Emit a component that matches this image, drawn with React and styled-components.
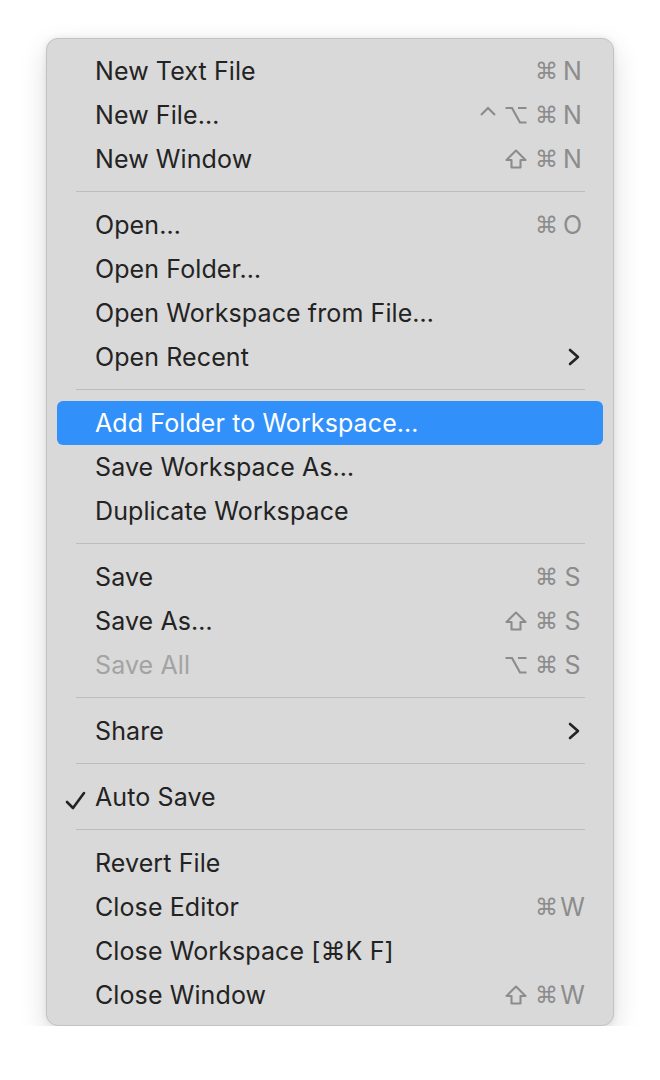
import React from 'react';
import styled, { createGlobalStyle } from 'styled-components';

const Global = createGlobalStyle`
  html, body { margin: 0; padding: 0; background: #ffffff; }
  body { font-family: Inter, "Liberation Sans", "DejaVu Sans", sans-serif; }
`;

const Page = styled.div`
  padding: 38px 0 0 46px;
`;

const Menu = styled.div`
  width: 568px;
  box-sizing: border-box;
  padding: 10px 10px 8px;
  background: #d9d9d9;
  border: 1px solid #c2c2c2;
  border-radius: 12px;
  box-shadow: 0 10px 28px rgba(0, 0, 0, 0.14), 0 0 6px rgba(0, 0, 0, 0.08);
`;

const Row = styled.div`
  position: relative;
  display: flex;
  align-items: center;
  height: 44px;
  padding: 0 17px 0 38px;
  border-radius: 6px;
  font-size: 25px;
  letter-spacing: 0.1px;
  color: ${p => (p.$active ? '#ffffff' : p.$disabled ? '#a3a3a3' : '#232323')};
  background: ${p => (p.$active ? '#3290fa' : 'transparent')};
`;

const Label = styled.span`
  flex: 1;
  white-space: nowrap;
`;

const Check = styled.span`
  position: absolute;
  left: 8px;
  top: 12px;
  width: 22px;
  height: 20px;
`;

const Keys = styled.span`
  display: flex;
  gap: 8px;
  align-items: center;
  color: #8c8c8c;
`;

const Key = styled.span`
  display: flex;
  align-items: center;
  justify-content: center;
  font-family: "DejaVu Sans", sans-serif;
  font-size: 23px;
`;

const Letter = styled.span`
  width: 27px;
  margin-left: -7px;
  text-align: center;
  font-family: Inter, "Liberation Sans", sans-serif;
  font-size: 25px;
`;

const Separator = styled.div`
  height: 1px;
  margin: 10px 18px 11px 19px;
  background: #bdbdbd;
`;

const ChevronBox = styled.span`
  display: flex;
  margin-right: 4px;
`;

const Chevron = () => (
  <svg width="16" height="20" viewBox="0 0 16 20">
    <path d="M4 3 L12 10 L4 17" fill="none" stroke="#232323" strokeWidth="2.6" strokeLinecap="round" strokeLinejoin="round" />
  </svg>
);

const CheckMark = () => (
  <svg width="22" height="20" viewBox="0 0 22 20">
    <path d="M2 11 L8 17 L19 2" fill="none" stroke="#232323" strokeWidth="2.6" strokeLinecap="round" strokeLinejoin="round" />
  </svg>
);

const ShiftIcon = () => (
  <svg width="22" height="20" viewBox="0 0 22 20">
    <path d="M11 1.5 L20.5 11 H15.5 V18.5 H6.5 V11 H1.5 Z" fill="none" stroke="#8c8c8c" strokeWidth="2.1" strokeLinejoin="round" />
  </svg>
);

const ControlIcon = () => (
  <svg width="18" height="20" viewBox="0 0 18 20">
    <path d="M2 10 L9 3 L16 10" fill="none" stroke="#8c8c8c" strokeWidth="2.2" strokeLinejoin="miter" />
  </svg>
);

const OptionIcon = () => (
  <svg width="22" height="20" viewBox="0 0 22 20">
    <path d="M0.5 3 H7 L15 17.5 H21.5 M13 3 H21.5" fill="none" stroke="#8c8c8c" strokeWidth="2.2" />
  </svg>
);

const groups = [
  [
    { label: 'New Text File', keys: ['⌘', 'N'] },
    { label: 'New File…', keys: ['⌃', '⌥', '⌘', 'N'] },
    { label: 'New Window', keys: ['⇧', '⌘', 'N'] },
  ],
  [
    { label: 'Open…', keys: ['⌘', 'O'] },
    { label: 'Open Folder…' },
    { label: 'Open Workspace from File…' },
    { label: 'Open Recent', sub: true },
  ],
  [
    { label: 'Add Folder to Workspace…', active: true },
    { label: 'Save Workspace As…' },
    { label: 'Duplicate Workspace' },
  ],
  [
    { label: 'Save', keys: ['⌘', 'S'] },
    { label: 'Save As…', keys: ['⇧', '⌘', 'S'] },
    { label: 'Save All', keys: ['⌥', '⌘', 'S'], disabled: true },
  ],
  [{ label: 'Share', sub: true }],
  [{ label: 'Auto Save', checked: true }],
  [
    { label: 'Revert File' },
    { label: 'Close Editor', keys: ['⌘', 'W'] },
    { label: 'Close Workspace [⌘K F]' },
    { label: 'Close Window', keys: ['⇧', '⌘', 'W'] },
  ],
];

const icons = { '⇧': ShiftIcon, '⌃': ControlIcon, '⌥': OptionIcon };

const renderKey = (k, i) => {
  if (/[A-Z]/.test(k)) return <Letter key={i}>{k}</Letter>;
  const Icon = icons[k];
  return <Key key={i}>{Icon ? <Icon /> : k}</Key>;
};

export default function App() {
  return (
    <Page>
      <Global />
      <Menu>
        {groups.map((group, gi) => (
          <React.Fragment key={gi}>
            {gi > 0 && <Separator />}
            {group.map(item => (
              <Row key={item.label} $active={item.active} $disabled={item.disabled}>
                {item.checked && (
                  <Check>
                    <CheckMark />
                  </Check>
                )}
                <Label>{item.label}</Label>
                {item.keys && <Keys>{item.keys.map(renderKey)}</Keys>}
                {item.sub && (
                  <ChevronBox>
                    <Chevron />
                  </ChevronBox>
                )}
              </Row>
            ))}
          </React.Fragment>
        ))}
      </Menu>
    </Page>
  );
}
